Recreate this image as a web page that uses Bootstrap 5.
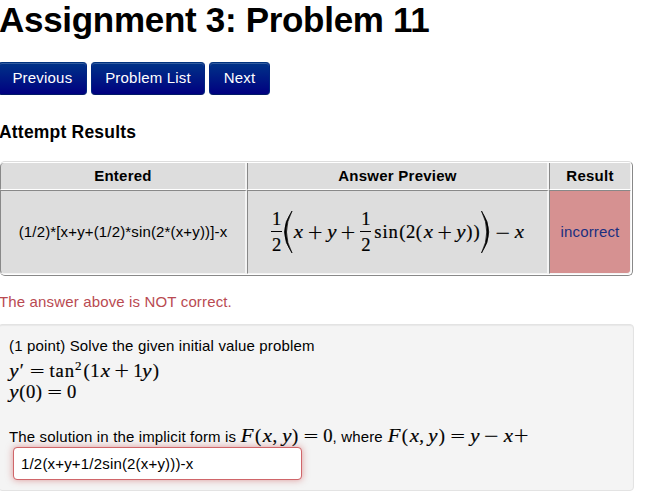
<!DOCTYPE html>
<html lang="en">
<head>
  <meta charset="UTF-8">
  <meta name="viewport" content="width=device-width, initial-scale=1.0">
  <title>Assignment 3: Problem 11</title>
  <link href="https://cdn.jsdelivr.net/npm/bootstrap@5.3.0/dist/css/bootstrap.min.css" rel="stylesheet">
  <style>
    body {
      font-family: "Liberation Sans", Arial, sans-serif;
      font-size: 15px;
      line-height: 20px;
      letter-spacing: .15px;
      color: #000;
      background-color: #fff;
      overflow: hidden;
    }
    .page {
      width: 634px;
    }
    h1 {
      font-size: 35px;
      font-weight: bold;
      line-height: 40px;
      letter-spacing: -.3px;
      margin-left: -1px;
      white-space: nowrap;
    }
    h2 {
      font-size: 17.5px;
      font-weight: bold;
      line-height: 20px;
      letter-spacing: .2px;
      margin: 27px 0 19px -1px;
    }
    .nav-buttons {
      gap: 4px;
      margin-top: 22px;
      margin-left: -2px;
    }
    .btn-nav {
      --bs-btn-color: #fff;
      --bs-btn-hover-color: #fff;
      --bs-btn-font-size: 15px;
      --bs-btn-padding-x: 13.4px;
      --bs-btn-padding-y: 5px;
      --bs-btn-border-radius: 4px;
      --bs-btn-line-height: 20px;
      padding-bottom: 6px;
      letter-spacing: .2px;
      border: 1px solid #00327f;
      border-color: #00327f #002680 #001a66;
      background-image: linear-gradient(#003388, #000080);
      box-shadow: inset 0 1px 0 rgba(255, 255, 255, .2);
    }

    /* results table */
    .attempts {
      width: 633px;
      border: 1px solid;
      border-color: #ddd #888 #888 #ddd;
      border-left: 0;
      border-radius: 5px;
      padding: 1px 1px 1px 0;
    }
    .attempts table {
      width: 631px;
      table-layout: fixed;
      border-collapse: separate;
      border-spacing: 0;
    }
    .attempts th, .attempts td {
      background-color: #ddd;
      border: 1px solid;
      border-color: #888 #f4f4f4 #f4f4f4 #888;
      border-right-width: 2px;
      text-align: center;
      vertical-align: middle;
      padding: 0;
    }
    .attempts th {
      height: 27px;
      letter-spacing: .25px;
      border-top: 0;
      border-bottom: 1px solid #fff;
    }
    .attempts td {
      height: 84px;
      padding-bottom: 1px;
    }
    .attempts tr > :last-child {
      border-right-width: 1px;
    }
    .attempts tr:first-child > :first-child {
      border-top-left-radius: 4px;
    }
    .attempts tr:last-child > :first-child {
      border-bottom-left-radius: 4px;
    }
    .attempts td.wrong {
      background-color: #d69191;
      color: #1a2f80;
      border-bottom-right-radius: 4px;
    }
    .not-correct {
      color: #b94a52;
      margin: 16px 0 12px -1px;
    }

    .problem {
      height: 167px;
      margin-left: -2px;
      padding: 11px 10px;
      background-color: #f4f4f4;
      border: 1px solid #e3e3e3;
      border-radius: 4px;
      box-shadow: inset 0 1px 1px rgba(0, 0, 0, .05);
    }
    .answer {
      width: 289px;
      height: 33px;
      margin-left: 4px;
      padding: 0 7px 1px;
      font-size: 15px;
      letter-spacing: .18px;
      color: #000;
      border: 1px solid #d0666a;
      border-radius: 4px;
      box-shadow: 0 0 7px rgba(200, 60, 60, .5);
    }

    /* formulas */
    .fm {
      display: inline-flex;
      align-items: baseline;
      font-family: "Liberation Serif", "Times New Roman", serif;
      font-size: 18.6px;
      line-height: 21px;
      letter-spacing: 0;
      white-space: pre;
      -webkit-text-stroke: .2px #000;
    }
    .fm i, .fm b {
      display: inline-block;
      width: .572em;
      text-align: center;
    }
    .fm i {
      transform: scaleX(1.12);
    }
    .fm i.vy {
      width: .52em;
    }
    .fm i.vf {
      width: .76em;
    }
    .fm b {
      font-family: "DejaVu Sans", sans-serif;
      font-size: 1.02em;
      font-weight: 200;
      line-height: 10px;
      width: 1.21em;
      -webkit-text-stroke: .3px #000;
    }
    .fm b.rel {
      width: 1.3em;
    }
    .fm b.tight {
      width: .72em;
    }
    .fm .fn {
      letter-spacing: .05em;
    }
    .fm .pr {
      width: .389em;
      text-align: center;
    }
    .fm .prime {
      width: .33em;
      text-align: center;
    }
    .fm sup {
      font-size: .7em;
      line-height: 10px;
      width: .62em;
      top: -.55em;
    }
    .fm .frac {
      display: inline-flex;
      flex-direction: column;
      align-items: center;
      align-self: center;
      width: 11px;
      margin: 0 1px;
      line-height: 25px;
    }
    .fm .frac span + span {
      border-top: 1px solid #000;
      width: 11px;
      text-align: center;
    }
    .fm .frac + .fn {
      margin-left: 2px;
    }
    .fm svg {
      align-self: center;
    }
    .preview {
      align-items: center;
    }
    .sol {
      margin-top: 23px;
    }
  </style>
</head>

<body>
  <div class="page">
    <h1 class="mb-0">Assignment 3: Problem 11</h1>

    <div class="nav-buttons d-flex">
      <a class="btn btn-nav" href="#">Previous</a>
      <a class="btn btn-nav" href="#">Problem List</a>
      <a class="btn btn-nav" href="#">Next</a>
    </div>

    <h2>Attempt Results</h2>

    <div class="attempts">
      <table>
        <colgroup>
          <col style="width: 247px">
          <col style="width: 302px">
          <col>
        </colgroup>
        <tr>
          <th>Entered</th>
          <th>Answer Preview</th>
          <th>Result</th>
        </tr>
        <tr>
          <td>(1/2)*[x+y+(1/2)*sin(2*(x+y))]-x</td>
          <td>
            <span class="fm preview"><span class="frac"><span>1</span><span>2</span></span><svg width="10" height="44" viewBox="0 0 10 44"><path d="M9 1Q-6 22 9 43Q-2 22 9 1Z" stroke="#000" stroke-width=".7"/></svg><i>x</i><b>+</b><i class="vy">y</i><b>+</b><span class="frac"><span>1</span><span>2</span></span><span class="fn">sin</span><span class="pr">(</span>2<span class="pr">(</span><i>x</i><b>+</b><i class="vy">y</i><span class="pr">)</span><span class="pr">)</span><svg width="11" height="44" viewBox="0 0 11 44"><path d="M1.5 1Q16 22 1.5 43Q12 22 1.5 1Z" stroke="#000" stroke-width=".7"/></svg><b>−</b><i>x</i></span>
          </td>
          <td class="wrong">incorrect</td>
        </tr>
      </table>
    </div>

    <p class="not-correct">The answer above is NOT correct.</p>

    <div class="problem">
      <div>(1 point) Solve the given initial value problem</div>
      <div class="d-flex mt-1"><span class="fm"><i class="vy">y</i><span class="prime">′</span><b class="rel">=</b><span class="fn">tan</span><sup>2</sup><span class="pr">(</span>1<i>x</i><b>+</b>1<i class="vy">y</i><span class="pr">)</span></span></div>
      <div class="d-flex"><span class="fm"><i class="vy">y</i><span class="pr">(</span>0<span class="pr">)</span><b class="rel">=</b>0</span></div>
      <div class="d-flex align-items-baseline text-nowrap sol">The solution in the implicit form is&nbsp;<span class="fm"><i class="vf">F</i><span class="pr">(</span><i>x</i>, <i class="vy">y</i><span class="pr">)</span><b class="rel">=</b>0</span>, where&nbsp;<span class="fm"><i class="vf">F</i><span class="pr">(</span><i>x</i>, <i class="vy">y</i><span class="pr">)</span><b class="rel">=</b><i class="vy">y</i><b>−</b><i>x</i><b class="tight">+</b></span></div>
      <input type="text" class="form-control answer" value="1/2(x+y+1/2sin(2(x+y)))-x">
    </div>
  </div>

  <script src="https://cdn.jsdelivr.net/npm/bootstrap@5.3.0/dist/js/bootstrap.bundle.min.js"></script>
</body>
</html>
